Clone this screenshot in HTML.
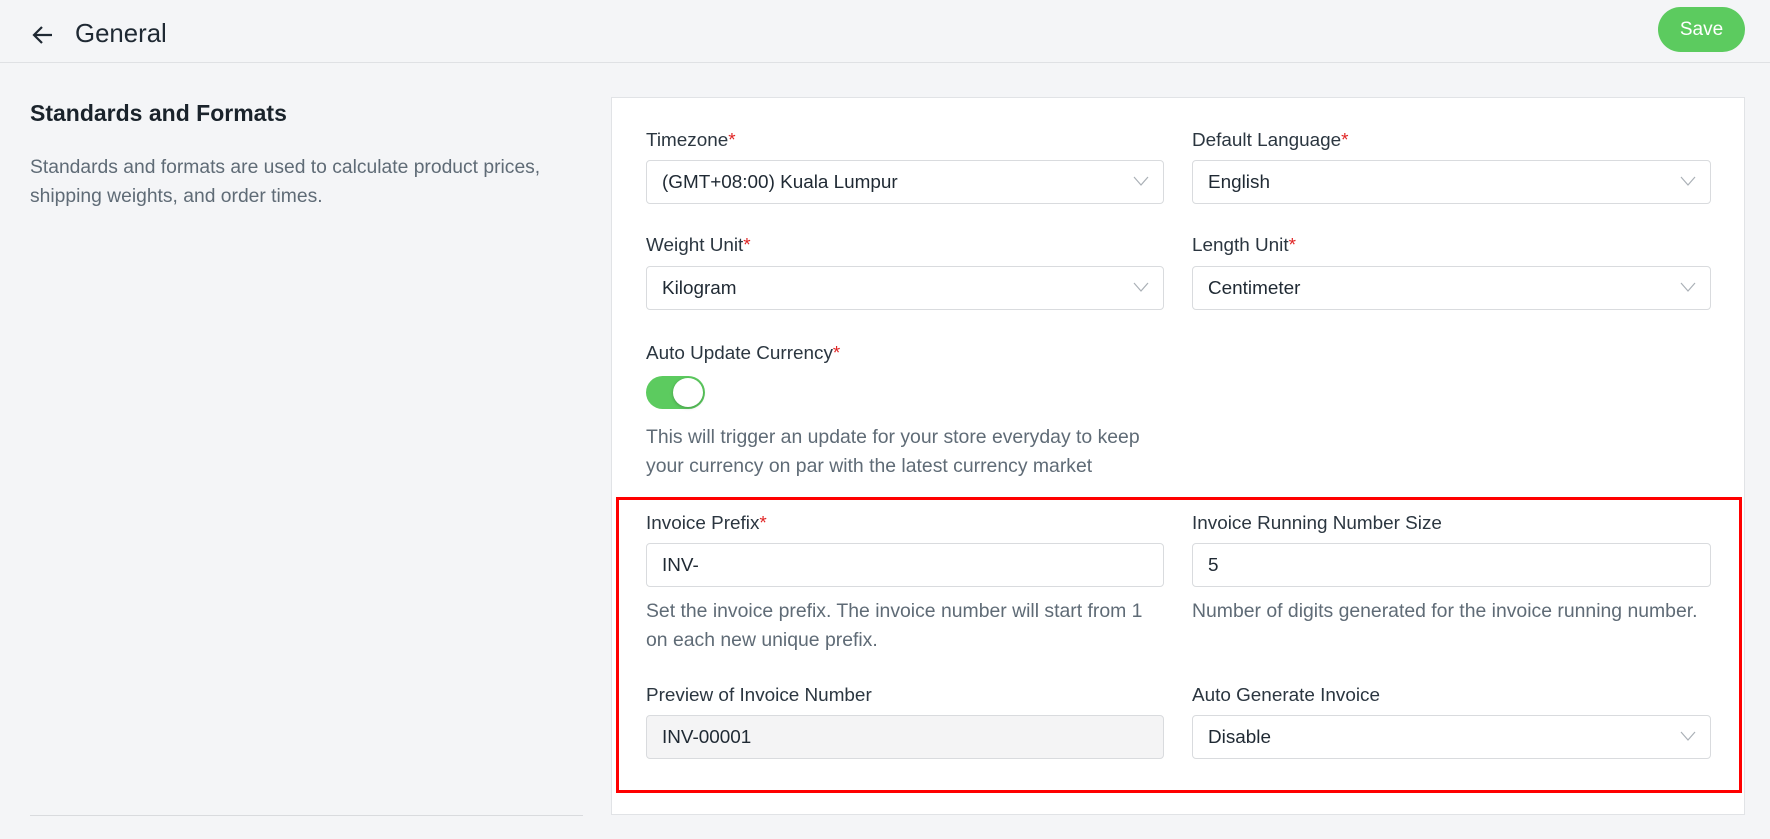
<!DOCTYPE html>
<html><head><style>
*{box-sizing:border-box;margin:0;padding:0}
body{width:1770px;height:839px;background:#f4f5f7;font-family:"Liberation Sans",sans-serif;position:relative;overflow:hidden;color:#1f2933}
.a{position:absolute}
.lbl{position:absolute;font-size:18.9px;color:#2b3640;line-height:22px}
.lbl b{color:#e02424;font-weight:normal}
.inp{position:absolute;height:44px;border:1px solid #d9dbde;border-radius:4px;background:#fff;font-size:18.9px;line-height:43px;padding-left:15px;color:#1f2933}
.help{position:absolute;font-size:19.4px;color:#5f6b76;line-height:29px}
.chev{position:absolute;right:14px;top:15px;width:16px;height:10px}
</style></head><body>
<svg class="a" style="left:32px;top:25px" width="22" height="20" viewBox="0 0 22 20"><path d="M20 10H3M10 2L2 10l8 8" fill="none" stroke="#1f2933" stroke-width="2.2"/></svg>
<div class="a" style="left:75px;top:20px;font-size:25.8px;color:#1f2933">General</div>
<div class="a" style="left:1658px;top:7px;width:87px;height:45px;border-radius:23px;background:#5ccb5f;color:#fff;font-size:19px;line-height:46px;text-align:center">Save</div>
<div class="a" style="left:0;top:62px;width:1770px;height:1px;background:#dfe1e4"></div>
<div class="a" style="left:30px;top:100px;font-size:23px;font-weight:bold;color:#1a232b">Standards and Formats</div>
<div class="help" style="left:30px;top:153px;font-size:19.3px;color:#5f6b76">Standards and formats are used to calculate product prices,<br>shipping weights, and order times.</div>
<div class="a" style="left:30px;top:815px;width:553px;height:1px;background:#d9dbde"></div>
<div class="a" style="left:611px;top:97px;width:1134px;height:718px;background:#fff;border:1px solid #e1e3e6"></div>

<div class="lbl" style="left:646px;top:130px">Timezone<b>*</b></div>
<div class="inp" style="left:646px;top:160px;width:518px">(GMT+08:00) Kuala Lumpur<svg class="chev" viewBox="0 0 16 10"><path d="M1 1l7 8 7-8" fill="none" stroke="#aab0b6" stroke-width="1.2"/></svg></div>
<div class="lbl" style="left:1192px;top:130px">Default Language<b>*</b></div>
<div class="inp" style="left:1192px;top:160px;width:519px">English<svg class="chev" viewBox="0 0 16 10"><path d="M1 1l7 8 7-8" fill="none" stroke="#aab0b6" stroke-width="1.2"/></svg></div>

<div class="lbl" style="left:646px;top:235px">Weight Unit<b>*</b></div>
<div class="inp" style="left:646px;top:266px;width:518px">Kilogram<svg class="chev" viewBox="0 0 16 10"><path d="M1 1l7 8 7-8" fill="none" stroke="#aab0b6" stroke-width="1.2"/></svg></div>
<div class="lbl" style="left:1192px;top:235px">Length Unit<b>*</b></div>
<div class="inp" style="left:1192px;top:266px;width:519px">Centimeter<svg class="chev" viewBox="0 0 16 10"><path d="M1 1l7 8 7-8" fill="none" stroke="#aab0b6" stroke-width="1.2"/></svg></div>

<div class="lbl" style="left:646px;top:343px">Auto Update Currency<b>*</b></div>
<div class="a" style="left:646px;top:376px;width:59px;height:33px;border-radius:17px;background:#5ccb5f"></div>
<div class="a" style="left:673px;top:378px;width:30px;height:29px;border-radius:50%;background:#fff;box-shadow:0 1px 3px rgba(0,0,0,.25)"></div>
<div class="help" style="left:646px;top:423px">This will trigger an update for your store everyday to keep<br>your currency on par with the latest currency market</div>

<div class="a" style="left:616px;top:497px;width:1126px;height:296px;border:3.5px solid #ff0000"></div>

<div class="lbl" style="left:646px;top:513px">Invoice Prefix<b>*</b></div>
<div class="inp" style="left:646px;top:543px;width:518px">INV-</div>
<div class="help" style="left:646px;top:597px">Set the invoice prefix. The invoice number will start from 1<br>on each new unique prefix.</div>
<div class="lbl" style="left:1192px;top:513px">Invoice Running Number Size</div>
<div class="inp" style="left:1192px;top:543px;width:519px">5</div>
<div class="help" style="left:1192px;top:597px">Number of digits generated for the invoice running number.</div>

<div class="lbl" style="left:646px;top:685px">Preview of Invoice Number</div>
<div class="inp" style="left:646px;top:715px;width:518px;background:#f4f4f5">INV-00001</div>
<div class="lbl" style="left:1192px;top:685px">Auto Generate Invoice</div>
<div class="inp" style="left:1192px;top:715px;width:519px">Disable<svg class="chev" viewBox="0 0 16 10"><path d="M1 1l7 8 7-8" fill="none" stroke="#aab0b6" stroke-width="1.2"/></svg></div>
</body></html>
